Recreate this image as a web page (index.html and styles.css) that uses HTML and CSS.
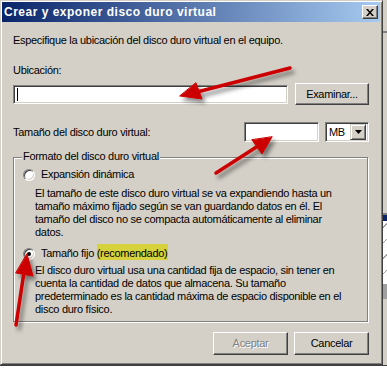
FILE: index.html
```html
<!DOCTYPE html>
<html lang="es">
<head>
<meta charset="utf-8">
<title>Crear y exponer disco duro virtual</title>
<link rel="stylesheet" href="styles.css">
</head>
<body>
<div class="screen">
  <div class="top-row">
    <div class="dialog">
      <div class="titlebar">
        <span class="title">Crear y exponer disco duro virtual</span>
        <span class="close-btn">
          <svg width="8" height="7" viewBox="0 0 8 7"><path d="M0 0h2l2 2.5 2-2.5h2l-3 3.5 3 3.5h-2l-2-2.5-2 2.5h-2l3-3.5z" fill="#000"/></svg>
        </span>
      </div>
      <div class="content">
        <p class="intro">Especifique la ubicación del disco duro virtual en el equipo.</p>
        <p class="label">Ubicación:</p>
        <div class="path-row">
          <div class="field path-field"><span class="caret"></span></div>
          <span class="btn">Examinar...</span>
        </div>
        <div class="size-row">
          <span class="size-label">Tamaño del disco duro virtual:</span>
          <div class="field size-field"></div>
          <div class="field combo">
            <span class="combo-text">MB</span>
            <span class="combo-arrow"><svg width="7" height="4" viewBox="0 0 7 4"><path d="M0 0h7l-3.5 4z" fill="#000"/></svg></span>
          </div>
        </div>
        <div class="group">
          <span class="legend">Formato del disco duro virtual</span>
          <div class="option first">
            <span class="radio"></span>
            <span class="opt-label">Expansión dinámica</span>
          </div>
          <p class="desc">El tamaño de este disco duro virtual se va expandiendo hasta un<br>tamaño máximo fijado según se van guardando datos en él. El<br>tamaño del disco no se compacta automáticamente al eliminar<br>datos.</p>
          <div class="option second">
            <span class="radio checked"></span>
            <span class="opt-label">Tamaño fijo <span class="hl">(recomendado)</span></span>
          </div>
          <p class="desc desc2">El disco duro virtual usa una cantidad fija de espacio, sin tener en<br>cuenta la cantidad de datos que almacena. Su tamaño<br>predeterminado es la cantidad máxima de espacio disponible en el<br>disco duro físico.</p>
        </div>
        <div class="actions">
          <span class="btn action disabled">Aceptar</span>
          <span class="btn action">Cancelar</span>
        </div>
      </div>
    </div>
    <div class="side">
      <div class="side-a"></div>
      <div class="side-line"></div>
      <div class="side-b"></div>
      <div class="side-line"></div>
      <div class="side-blue"></div>
      <div class="side-list"></div>
      <div class="side-gray"></div>
      <div class="side-c"></div>
    </div>
  </div>
  <div class="below">Unificando discos duros virtuales</div>
  <svg class="arrows" width="387" height="369" viewBox="0 0 387 369">
    <defs>
      <filter id="shadow" x="-30%" y="-30%" width="160%" height="160%">
        <feDropShadow dx="3" dy="4" stdDeviation="2" flood-color="#000" flood-opacity="0.45"/>
      </filter>
    </defs>
    <g filter="url(#shadow)" fill="#cc0000" stroke="#cc0000" stroke-linecap="round" stroke-linejoin="round">
      <line x1="290" y1="68" x2="197" y2="92" stroke-width="3.5"/>
      <path d="M180 96 L202 99 L196 83 Z" stroke-width="1"/>
      <line x1="216" y1="173" x2="258" y2="146" stroke-width="3.5"/>
      <path d="M272 137 L262 154 L252 140 Z" stroke-width="1"/>
      <line x1="16" y1="325" x2="24" y2="272" stroke-width="3.5"/>
      <path d="M27 254 L33 276 L16 273 Z" stroke-width="1"/>
    </g>
  </svg>
</div>
</body>
</html>
```
FILE: styles.css
```css
* { box-sizing: border-box; }
html, body { margin: 0; padding: 0; background: #d4d0c8; }
body {
  font-family: "Liberation Sans", Arial, sans-serif;
  font-size: 11px;
  line-height: 13px;
  letter-spacing: -0.3px;
  color: #000;
}
p { margin: 0; }
.screen {
  position: relative;
  width: 387px;
  height: 369px;
  overflow: hidden;
  background: #fff;
}
.top-row { display: flex; }
.dialog {
  width: 383px;
  height: 365px;
  flex: none;
  background: #d4d0c8;
  border-style: solid;
  border-width: 1px 1px 1px 1px;
  border-color: #d4d0c8 #404040 #404040 #d4d0c8;
  box-shadow: inset 1px 1px #fff, inset -1px -1px #808080;
  padding: 1px 2px 2px 1px;
  display: flex;
  flex-direction: column;
}
.titlebar {
  height: 20px;
  background: linear-gradient(to right, #0a246a, #a6caf0);
  display: flex;
  align-items: center;
  justify-content: space-between;
  padding: 0 2px 0 2px;
}
.title {
  color: #fff;
  font-weight: bold;
  font-size: 12px;
  letter-spacing: 0.5px;
}
.close-btn {
  width: 16px;
  height: 14px;
  background: #d4d0c8;
  border: 1px solid;
  border-color: #fff #404040 #404040 #fff;
  box-shadow: inset -1px -1px #808080;
  display: flex;
  align-items: center;
  justify-content: center;
}
.content {
  padding: 12px 11px 0 11px;
  flex: 1;
}
.label { margin-top: 17px; }
.path-row {
  margin-top: 6px;
  display: flex;
  align-items: center;
  gap: 7px;
}
.field {
  background: #fff;
  border: 1px solid;
  border-color: #808080 #fff #fff #808080;
  box-shadow: inset 1px 1px #404040, inset -1px -1px #d4d0c8;
}
.path-field {
  width: 275px;
  height: 19px;
  padding: 2px 0 0 3px;
}
.caret {
  display: block;
  width: 1px;
  height: 13px;
  background: #000;
}
.btn {
  display: flex;
  align-items: center;
  justify-content: center;
  background: #d4d0c8;
  border: 1px solid;
  border-color: #fff #404040 #404040 #fff;
  box-shadow: inset -1px -1px #808080;
  width: 74px;
  height: 22px;
}
.size-row {
  margin-top: 17px;
  display: flex;
  align-items: center;
}
.size-label { flex: 1; }
.size-field { width: 75px; height: 20px; }
.combo {
  margin-left: 6px;
  width: 44px;
  height: 20px;
  display: flex;
  align-items: center;
  padding: 2px 2px 2px 3px;
}
.combo-text { flex: 1; }
.combo-arrow {
  width: 16px;
  height: 16px;
  background: #d4d0c8;
  border: 1px solid;
  border-color: #d4d0c8 #404040 #404040 #d4d0c8;
  box-shadow: inset 1px 1px #fff, inset -1px -1px #808080;
  display: flex;
  align-items: center;
  justify-content: center;
}
.group {
  margin-top: 15px;
  margin-right: 1px;
  border: 1px solid #808080;
  box-shadow: inset 1px 1px #fff, 1px 1px #fff;
  padding: 0 0 5px 9px;
}
.legend {
  display: table;
  margin: -8px 0 0 -1px;
  padding: 0 1px;
  background: #d4d0c8;
}
.option {
  display: flex;
  align-items: center;
  height: 13px;
}
.option.first { margin-top: 5px; }
.option.second { margin-top: 8px; }
.radio {
  width: 12px;
  height: 12px;
  border-radius: 50%;
  border: 1px solid;
  border-color: #808080 #fff #fff #808080;
  background: #fff;
  box-shadow: inset 1px 1px #404040, inset -1px -1px #d4d0c8;
  margin-right: 6px;
  display: flex;
  align-items: center;
  justify-content: center;
}
.radio.checked::after {
  content: "";
  width: 4px;
  height: 4px;
  border-radius: 50%;
  background: #000;
}
.hl {
  background: #d6d23c;
  padding: 3px 1px 1px 0;
}
.desc {
  margin-top: 6px;
  padding-left: 12px;
  white-space: nowrap;
}
.desc2 { margin-top: 4px; }
.actions {
  margin-top: 10px;
  display: flex;
  justify-content: flex-end;
  gap: 6px;
}
.action { width: 75px; height: 23px; }
.disabled {
  color: #808080;
  text-shadow: 1px 1px #fff;
}
.side {
  flex: 1;
  display: flex;
  flex-direction: column;
  background: #d4d0c8;
}
.side-a { height: 31px; background: #d4d0c8; }
.side-line { height: 2px; background: #808080; }
.side-b { height: 180px; background: #d4d0c8; }
.side-blue { height: 6px; background: #0a246a; }
.side-list {
  height: 63px;
  background: repeating-linear-gradient(135deg, #fff 0 4px, #a0a0a0 4px 5px, #fff 5px 11px);
}
.side-gray { height: 15px; background: #a0a0a0; }
.side-c { flex: 1; background: #d4d0c8; }
.below {
  border-top: 1px solid #404040;
  background: #fff;
  font-weight: bold;
  font-size: 11px;
  line-height: 13px;
  padding: 1px 0 0 2px;
  height: 4px;
  overflow: visible;
  white-space: nowrap;
}
.arrows {
  position: absolute;
  left: 0;
  top: 0;
  pointer-events: none;
}
```
